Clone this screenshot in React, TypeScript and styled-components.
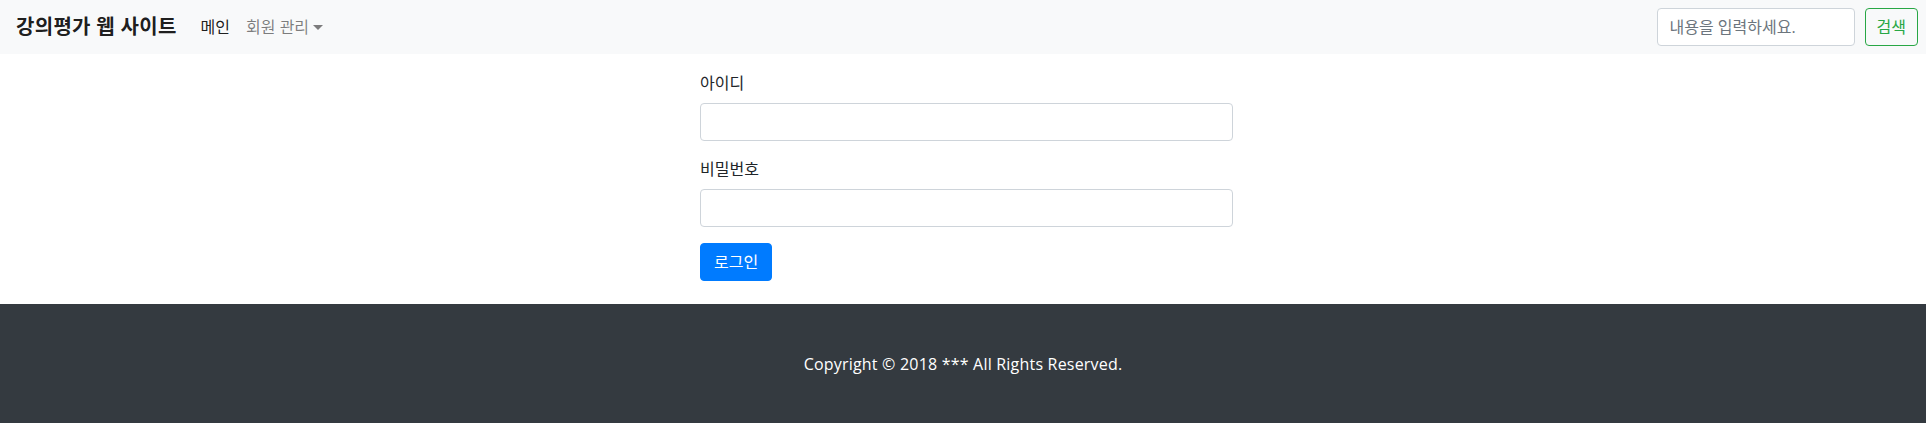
import styled, { createGlobalStyle } from "styled-components";

const GlobalStyle = createGlobalStyle`
  * {
    box-sizing: border-box;
  }
  body {
    margin: 0;
    font-family: "Open Sans", "Noto Sans CJK KR", sans-serif;
    font-size: 16px;
    line-height: 1.5;
    color: #212529;
    background-color: #fff;
  }
`;

const Navbar = styled.nav`
  display: flex;
  align-items: center;
  height: 54px;
  padding: 0 8px 0 16px;
  background-color: #f8f9fa;
`;

const Brand = styled.a`
  font-size: 20px;
  font-weight: bold;
  line-height: 30px;
  letter-spacing: 0.3px;
  color: rgba(0, 0, 0, 0.9);
  text-decoration: none;
  margin-right: 16px;
  white-space: nowrap;
`;

const NavList = styled.ul`
  display: flex;
  list-style: none;
  margin: 0;
  padding: 0;
  flex: 1;
`;

const NavLink = styled.a<{ $active?: boolean }>`
  display: flex;
  align-items: center;
  padding: 8px;
  color: ${(p) => (p.$active ? "rgba(0, 0, 0, 0.9)" : "rgba(0, 0, 0, 0.5)")};
  text-decoration: none;
  cursor: pointer;
`;

const Caret = styled.span`
  display: inline-block;
  margin-left: 4px;
  border-top: 5px solid;
  border-right: 5px solid transparent;
  border-left: 5px solid transparent;
`;

const SearchForm = styled.form`
  display: flex;
  align-items: center;
  gap: 10px;
`;

const SearchInput = styled.input`
  width: 198px;
  height: 38px;
  padding: 6px 12px;
  font: inherit;
  color: #495057;
  border: 1px solid #ced4da;
  border-radius: 4px;
  background: #fff;
  &::placeholder {
    color: #6c757d;
  }
`;

const OutlineButton = styled.button`
  height: 38px;
  padding: 6px 11px;
  font: inherit;
  color: #28a745;
  background: transparent;
  border: 1px solid #28a745;
  border-radius: 4px;
  cursor: pointer;
`;

const Main = styled.main`
  width: 540px;
  margin: 0 auto;
  padding: 17px 0 23px 7px;
`;

const FormGroup = styled.div`
  display: flex;
  flex-direction: column;
  margin-bottom: 16px;
`;

const Label = styled.label`
  margin-bottom: 8px;
  line-height: 24px;
`;

const TextInput = styled.input`
  height: 38px;
  padding: 6px 12px;
  font: inherit;
  border: 1px solid #ced4da;
  border-radius: 4px;
  background: #fff;
`;

const PrimaryButton = styled.button`
  height: 38px;
  padding: 6px 13px;
  font: inherit;
  color: #fff;
  background-color: #007bff;
  border: 1px solid #007bff;
  border-radius: 4px;
  cursor: pointer;
`;

const Footer = styled.footer`
  padding: 48px 0;
  background-color: #343a40;
  color: #fff;
  text-align: center;
  letter-spacing: 0.2px;
`;

export default function App() {
  return (
    <>
      <GlobalStyle />
      <Navbar>
        <Brand href="#">강의평가 웹 사이트</Brand>
        <NavList>
          <li>
            <NavLink $active>메인</NavLink>
          </li>
          <li>
            <NavLink>
              회원 관리
              <Caret />
            </NavLink>
          </li>
        </NavList>
        <SearchForm onSubmit={(e) => e.preventDefault()}>
          <SearchInput type="search" placeholder="내용을 입력하세요." />
          <OutlineButton type="submit">검색</OutlineButton>
        </SearchForm>
      </Navbar>
      <Main>
        <form onSubmit={(e) => e.preventDefault()}>
          <FormGroup>
            <Label htmlFor="userID">아이디</Label>
            <TextInput id="userID" type="text" />
          </FormGroup>
          <FormGroup>
            <Label htmlFor="userPassword">비밀번호</Label>
            <TextInput id="userPassword" type="password" />
          </FormGroup>
          <PrimaryButton type="submit">로그인</PrimaryButton>
        </form>
      </Main>
      <Footer>Copyright © 2018 *** All Rights Reserved.</Footer>
    </>
  );
}
